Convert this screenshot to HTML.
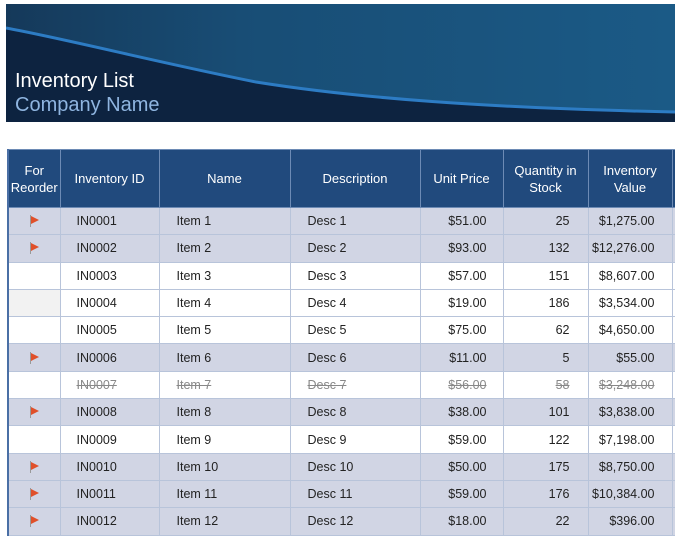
<!DOCTYPE html>
<html><head><meta charset="utf-8"><style>
*{margin:0;padding:0;box-sizing:border-box}
body{width:675px;height:520px;overflow:hidden;background:#fff;font-family:"Liberation Sans",sans-serif;position:relative}
#ban{position:absolute;left:6px;top:4px;width:669px;height:118px;overflow:hidden;background:#0d2340}
#ban svg{position:absolute;left:0;top:0}
.t1{position:absolute;left:9px;top:66px;color:#fff;font-size:20px}
.t2{position:absolute;left:9px;top:90px;color:#8fb5e0;font-size:20px}
table{position:absolute;left:7px;top:149px;border-collapse:collapse;table-layout:fixed;width:700px;border-left:2px solid #4a6fa5}
td,th{border:1px solid #b8c4da;font-size:12.5px;color:#222;white-space:nowrap;overflow:hidden}
th{background:#214a7d;color:#fff;font-weight:normal;font-size:13px;line-height:17px;height:58px;border-color:#6d8bb5;text-align:center}
td{height:27.3px}
tr.f td{background:#d1d5e4}
tr.w td{background:#fff}
tr.g td:first-child{background:#f2f2f2}
.l1{padding-left:16px}.l2{padding-left:17px}.l3{padding-left:17px}
.r1{text-align:right;padding-right:16px}.r2{text-align:right;padding-right:18px}.r3{text-align:right;padding-right:17px}
.s td{color:#888;text-decoration:line-through}
.fl{display:block;margin:0 auto 0 21px;width:10px;height:12px;position:relative}
.fl:before{content:"";position:absolute;left:0;top:0;width:1px;height:12px;background:#999}
.fl:after{content:"";position:absolute;left:1px;top:1px;border-left:8px solid #e0502a;border-top:4px solid transparent;border-bottom:4px solid transparent}
</style></head><body>
<div id="ban">
<svg width="669" height="118" viewBox="0 0 669 118">
<defs><linearGradient id="g" x1="0" y1="0" x2="1" y2="0"><stop offset="0" stop-color="#15395a"/><stop offset="0.35" stop-color="#184d75"/><stop offset="1" stop-color="#1b5a86"/></linearGradient></defs>
<path d="M0 0H669V108C480 104 350 94 250 78C150 58 60 35 0 24Z" fill="url(#g)"/>
<path d="M0 24C60 35 150 58 250 78C350 94 480 104 669 108" stroke="#2d7cc4" stroke-width="3" fill="none"/>
</svg>
<div class="t1">Inventory List</div>
<div class="t2">Company Name</div>
</div>
<table>
<colgroup><col style="width:52px"><col style="width:99px"><col style="width:131px"><col style="width:130px"><col style="width:83px"><col style="width:85px"><col style="width:84px"><col style="width:36px"></colgroup>
<tr><th>For<br>Reorder</th><th>Inventory ID</th><th>Name</th><th>Description</th><th>Unit Price</th><th>Quantity in<br>Stock</th><th>Inventory<br>Value</th><th></th></tr>
<tr class="f"><td><span class="fl"></span></td><td class="l1">IN0001</td><td class="l2">Item 1</td><td class="l3">Desc 1</td><td class="r1">$51.00</td><td class="r2">25</td><td class="r3">$1,275.00</td><td></td></tr>
<tr class="f"><td><span class="fl"></span></td><td class="l1">IN0002</td><td class="l2">Item 2</td><td class="l3">Desc 2</td><td class="r1">$93.00</td><td class="r2">132</td><td class="r3">$12,276.00</td><td></td></tr>
<tr class="w"><td></td><td class="l1">IN0003</td><td class="l2">Item 3</td><td class="l3">Desc 3</td><td class="r1">$57.00</td><td class="r2">151</td><td class="r3">$8,607.00</td><td></td></tr>
<tr class="w g"><td></td><td class="l1">IN0004</td><td class="l2">Item 4</td><td class="l3">Desc 4</td><td class="r1">$19.00</td><td class="r2">186</td><td class="r3">$3,534.00</td><td></td></tr>
<tr class="w"><td></td><td class="l1">IN0005</td><td class="l2">Item 5</td><td class="l3">Desc 5</td><td class="r1">$75.00</td><td class="r2">62</td><td class="r3">$4,650.00</td><td></td></tr>
<tr class="f"><td><span class="fl"></span></td><td class="l1">IN0006</td><td class="l2">Item 6</td><td class="l3">Desc 6</td><td class="r1">$11.00</td><td class="r2">5</td><td class="r3">$55.00</td><td></td></tr>
<tr class="w s"><td style="text-decoration:none"></td><td class="l1">IN0007</td><td class="l2">Item 7</td><td class="l3">Desc 7</td><td class="r1">$56.00</td><td class="r2">58</td><td class="r3">$3,248.00</td><td></td></tr>
<tr class="f"><td><span class="fl"></span></td><td class="l1">IN0008</td><td class="l2">Item 8</td><td class="l3">Desc 8</td><td class="r1">$38.00</td><td class="r2">101</td><td class="r3">$3,838.00</td><td></td></tr>
<tr class="w"><td></td><td class="l1">IN0009</td><td class="l2">Item 9</td><td class="l3">Desc 9</td><td class="r1">$59.00</td><td class="r2">122</td><td class="r3">$7,198.00</td><td></td></tr>
<tr class="f"><td><span class="fl"></span></td><td class="l1">IN0010</td><td class="l2">Item 10</td><td class="l3">Desc 10</td><td class="r1">$50.00</td><td class="r2">175</td><td class="r3">$8,750.00</td><td></td></tr>
<tr class="f"><td><span class="fl"></span></td><td class="l1">IN0011</td><td class="l2">Item 11</td><td class="l3">Desc 11</td><td class="r1">$59.00</td><td class="r2">176</td><td class="r3">$10,384.00</td><td></td></tr>
<tr class="f"><td><span class="fl"></span></td><td class="l1">IN0012</td><td class="l2">Item 12</td><td class="l3">Desc 12</td><td class="r1">$18.00</td><td class="r2">22</td><td class="r3">$396.00</td><td></td></tr>
</table>
</body></html>
